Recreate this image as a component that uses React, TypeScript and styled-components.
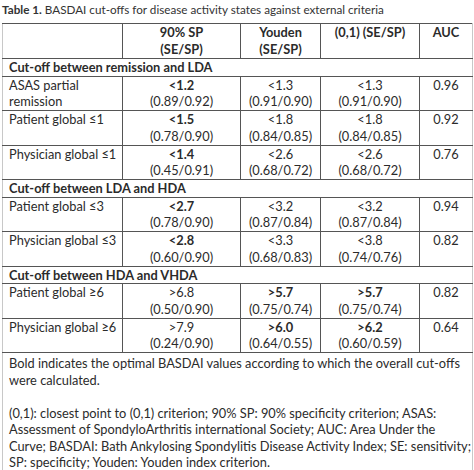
import React from "react";
import styled, { createGlobalStyle } from "styled-components";

const Global = createGlobalStyle`
  html, body { margin: 0; padding: 0; background: #fff; }
  body { font-family: "Lato", "Open Sans", sans-serif; color: #2b2b2b; }
`;

const Page = styled.div`
  width: 474px;
  padding: 0 0 0 2px;
  box-sizing: border-box;
`;

const Title = styled.div`
  font-size: 11.7px;
  line-height: 16px;
  height: 23px;
  padding-top: 1px;
  box-sizing: border-box;
  color: #333;
  white-space: nowrap;
  b { font-weight: 700; }
`;

const Table = styled.table`
  border-collapse: collapse;
  table-layout: fixed;
  width: 471px;
  font-size: 12.8px;
  line-height: 16.75px;
  border-left: 1px solid #c8c8c8;
  border-right: 1px solid #c8c8c8;
`;

const Cell = styled.td<{ $align?: "left" | "center" }>`
  border: 1px solid #555;
  padding: 0 0 0 ${(p) => (p.$align === "left" ? "6px" : "0")};
  text-align: ${(p) => p.$align ?? "center"};
  vertical-align: top;
  white-space: nowrap;
  overflow: hidden;
  height: 33.5px;
  &:first-child { border-left-color: #c8c8c8; }
  &:last-child { border-right-color: #c8c8c8; }
`;

const Head = styled(Cell)`
  font-weight: 700;
  height: 34px;
  line-height: 17px;
`;

const Section = styled.td`
  border: 1px solid #555;
  border-left-color: #c8c8c8;
  border-right-color: #c8c8c8;
  padding: 0 0 0 6px;
  font-weight: 700;
  height: 16.5px;
  line-height: 16.5px;
  white-space: nowrap;
`;

const Foot = styled.td`
  border-top: 1px solid #555;
  border-bottom: 1px solid #c8c8c8;
  padding: 2px 0 0 6px;
  vertical-align: top;
  white-space: nowrap;
  line-height: 16.5px;
  height: 116px;
`;

const Para = styled.p`
  margin: 0 0 16.5px 0;
  &:last-child { margin: 0; }
`;

const Bold = styled.span`
  font-weight: 700;
`;

type Val = { v: string; se: string; b?: boolean };
type Row = { label: string[]; c: [Val, Val, Val]; auc: string };
type Group = { title: string; rows: Row[] };

const groups: Group[] = [
  {
    title: "Cut-off between remission and LDA",
    rows: [
      {
        label: ["ASAS partial", "remission"],
        c: [
          { v: "<1.2", se: "(0.89/0.92)", b: true },
          { v: "<1.3", se: "(0.91/0.90)" },
          { v: "<1.3", se: "(0.91/0.90)" },
        ],
        auc: "0.96",
      },
      {
        label: ["Patient global ≤1"],
        c: [
          { v: "<1.5", se: "(0.78/0.90)", b: true },
          { v: "<1.8", se: "(0.84/0.85)" },
          { v: "<1.8", se: "(0.84/0.85)" },
        ],
        auc: "0.92",
      },
      {
        label: ["Physician global ≤1"],
        c: [
          { v: "<1.4", se: "(0.45/0.91)", b: true },
          { v: "<2.6", se: "(0.68/0.72)" },
          { v: "<2.6", se: "(0.68/0.72)" },
        ],
        auc: "0.76",
      },
    ],
  },
  {
    title: "Cut-off between LDA and HDA",
    rows: [
      {
        label: ["Patient global ≤3"],
        c: [
          { v: "<2.7", se: "(0.78/0.90)", b: true },
          { v: "<3.2", se: "(0.87/0.84)" },
          { v: "<3.2", se: "(0.87/0.84)" },
        ],
        auc: "0.94",
      },
      {
        label: ["Physician global ≤3"],
        c: [
          { v: "<2.8", se: "(0.60/0.90)", b: true },
          { v: "<3.3", se: "(0.68/0.83)" },
          { v: "<3.8", se: "(0.74/0.76)" },
        ],
        auc: "0.82",
      },
    ],
  },
  {
    title: "Cut-off between HDA and VHDA",
    rows: [
      {
        label: ["Patient global ≥6"],
        c: [
          { v: ">6.8", se: "(0.50/0.90)" },
          { v: ">5.7", se: "(0.75/0.74)", b: true },
          { v: ">5.7", se: "(0.75/0.74)", b: true },
        ],
        auc: "0.82",
      },
      {
        label: ["Physician global ≥6"],
        c: [
          { v: ">7.9", se: "(0.24/0.90)" },
          { v: ">6.0", se: "(0.64/0.55)", b: true },
          { v: ">6.2", se: "(0.60/0.59)", b: true },
        ],
        auc: "0.64",
      },
    ],
  },
];

export default function App() {
  return (
    <Page>
      <Global />
      <Title>
        <b>Table 1.</b> BASDAI cut-offs for disease activity states against external criteria
      </Title>
      <Table>
        <colgroup>
          <col style={{ width: 120 }} />
          <col style={{ width: 118 }} />
          <col style={{ width: 80 }} />
          <col style={{ width: 99 }} />
          <col style={{ width: 53 }} />
        </colgroup>
        <tbody>
          <tr>
            <Head $align="left"></Head>
            <Head>90% SP<br />(SE/SP)</Head>
            <Head>Youden<br />(SE/SP)</Head>
            <Head>(0,1) (SE/SP)</Head>
            <Head>AUC</Head>
          </tr>
          {groups.map((g) => (
            <React.Fragment key={g.title}>
              <tr>
                <Section colSpan={5}>{g.title}</Section>
              </tr>
              {g.rows.map((r) => (
                <tr key={r.label.join(" ")}>
                  <Cell $align="left">
                    {r.label.map((l, i) => (
                      <React.Fragment key={i}>
                        {i > 0 && <br />}
                        {l}
                      </React.Fragment>
                    ))}
                  </Cell>
                  {r.c.map((c, i) => (
                    <Cell key={i}>
                      {c.b ? <Bold>{c.v}</Bold> : c.v}
                      <br />
                      {c.se}
                    </Cell>
                  ))}
                  <Cell>{r.auc}</Cell>
                </tr>
              ))}
            </React.Fragment>
          ))}
          <tr>
            <Foot colSpan={5}>
              <Para>
                Bold indicates the optimal BASDAI values according to which the overall cut-offs
                <br />
                were calculated.
              </Para>
              <Para>
                (0,1): closest point to (0,1) criterion; 90% SP: 90% specificity criterion; ASAS:
                <br />
                Assessment of SpondyloArthritis international Society; AUC: Area Under the
                <br />
                Curve; BASDAI: Bath Ankylosing Spondylitis Disease Activity Index; SE: sensitivity;
                <br />
                SP: specificity; Youden: Youden index criterion.
              </Para>
            </Foot>
          </tr>
        </tbody>
      </Table>
    </Page>
  );
}
